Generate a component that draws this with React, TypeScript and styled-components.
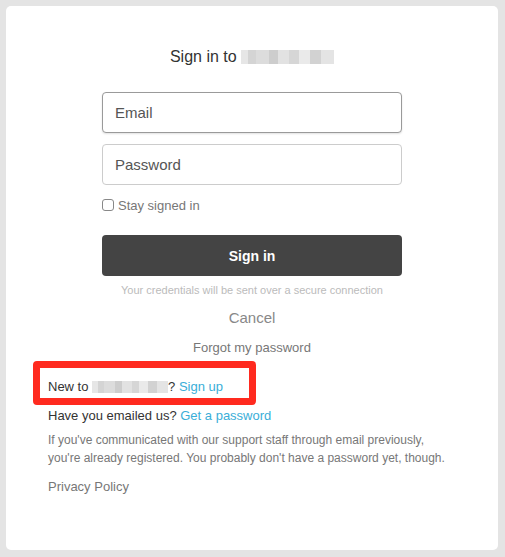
import React from 'react';
import styled, { createGlobalStyle } from 'styled-components';

const GlobalStyle = createGlobalStyle`
  html, body {
    margin: 0;
    padding: 0;
    background: #e4e4e4;
  }
  body {
    font-family: "Liberation Sans", Arial, sans-serif;
    -webkit-font-smoothing: antialiased;
  }
`;

const Page = styled.div`
  padding: 6px 7px 7px 6px;
  box-sizing: border-box;
  height: 557px;
`;

const Card = styled.div`
  background: #fff;
  border-radius: 5px;
  height: 100%;
  box-sizing: border-box;
  padding: 41px 41px 0;
  display: flex;
  flex-direction: column;
`;

const Title = styled.h1`
  margin: 0;
  font-size: 16px;
  line-height: 20px;
  font-weight: normal;
  color: #333;
  text-align: center;
  display: flex;
  justify-content: center;
  align-items: center;
`;

const Redacted = styled.span<{ w: number; h: number }>`
  display: inline-block;
  width: ${p => p.w}px;
  height: ${p => p.h}px;
  background: linear-gradient(
    to right,
    #e6e6e6 0 8%,
    #d4d4d4 8% 16%,
    #dcdcdc 16% 30%,
    #cdcdcd 30% 40%,
    #e2e2e2 40% 52%,
    #d6d6d6 52% 62%,
    #eaeaea 62% 74%,
    #d2d2d2 74% 86%,
    #e4e4e4 86% 100%
  );
  filter: blur(0.6px);
`;

const Form = styled.form`
  width: 300px;
  margin: 25px auto 0;
  display: flex;
  flex-direction: column;
`;

const Input = styled.input<{ focused?: boolean }>`
  box-sizing: border-box;
  width: 300px;
  height: 41px;
  padding: 0 12px;
  border: 1px solid ${p => (p.focused ? '#9a9a9a' : '#cccccc')};
  border-radius: 4px;
  font-family: inherit;
  font-size: 15px;
  color: #333;
  outline: none;
  box-shadow: ${p => (p.focused ? '0 1px 2px rgba(0,0,0,0.12)' : 'none')};
  & + & {
    margin-top: 11px;
  }
  &::placeholder {
    color: #555;
  }
`;

const CheckRow = styled.label`
  display: flex;
  align-items: center;
  margin-top: 12px;
  height: 16px;
  font-size: 13px;
  color: #777;
`;

const Box = styled.span`
  width: 12px;
  height: 12px;
  border: 1px solid #888;
  border-radius: 3px;
  margin-right: 4px;
  box-sizing: border-box;
`;

const Button = styled.button`
  margin-top: 22px;
  height: 41px;
  border: none;
  border-radius: 4px;
  background: #444;
  color: #fff;
  font-family: inherit;
  font-size: 14px;
  font-weight: bold;
`;

const Note = styled.div`
  margin-top: 7px;
  text-align: center;
  font-size: 11px;
  line-height: 14px;
  color: #bbb;
  white-space: nowrap;
`;

const Cancel = styled.div`
  margin-top: 12px;
  text-align: center;
  font-size: 15px;
  line-height: 18px;
  color: #888;
`;

const Forgot = styled.div`
  margin-top: 13px;
  text-align: center;
  font-size: 13px;
  line-height: 16px;
  color: #777;
`;

const Footer = styled.div`
  margin-top: 23px;
  padding-left: 1px;
`;

const Line = styled.div<{ gap?: number }>`
  position: relative;
  margin-top: ${p => p.gap ?? 0}px;
  font-size: 13px;
  line-height: 16px;
  color: #333;
  display: flex;
  align-items: center;
  white-space: pre;
`;

const Link = styled.a`
  color: #3aaed8;
  text-decoration: none;
`;

const Highlight = styled.span`
  position: absolute;
  left: -15px;
  top: -18px;
  width: 223px;
  height: 44px;
  box-sizing: border-box;
  border: 7px solid #ff2a1f;
  border-radius: 4px;
  pointer-events: none;
`;

const Para = styled.p`
  margin: 7px 0 0;
  font-size: 12px;
  line-height: 18px;
  color: #777;
`;

const Privacy = styled.div`
  margin-top: 12px;
  font-size: 13px;
  line-height: 16px;
  color: #777;
`;

export default function App() {
  return (
    <>
      <GlobalStyle />
      <Page>
        <Card>
          <Title>
            Sign in to&nbsp;<Redacted w={93} h={14} />
          </Title>
          <Form onSubmit={e => e.preventDefault()}>
            <Input focused placeholder="Email" />
            <Input type="password" placeholder="Password" />
            <CheckRow>
              <Box />
              Stay signed in
            </CheckRow>
            <Button type="submit">Sign in</Button>
            <Note>Your credentials will be sent over a secure connection</Note>
            <Cancel>Cancel</Cancel>
            <Forgot>Forgot my password</Forgot>
          </Form>
          <Footer>
            <Line>
              New to <Redacted w={76} h={12} />? <Link href="#">Sign up</Link>
              <Highlight />
            </Line>
            <Line gap={13}>
              Have you emailed us? <Link href="#">Get a password</Link>
            </Line>
            <Para>
              If you've communicated with our support staff through email previously,
              <br />
              you're already registered. You probably don't have a password yet, though.
            </Para>
            <Privacy>Privacy Policy</Privacy>
          </Footer>
        </Card>
      </Page>
    </>
  );
}
